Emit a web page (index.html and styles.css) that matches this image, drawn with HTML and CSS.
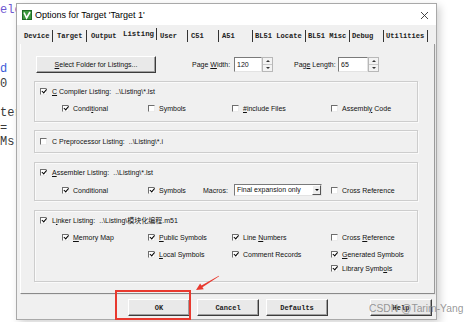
FILE: index.html
```html
<!DOCTYPE html>
<html lang="en">
<head>
  <meta charset="UTF-8">
  <title>Options for Target 'Target 1'</title>
  <link rel="stylesheet" href="styles.css">
</head>
<body>
<pre class="code"><span class="kw">ele</span>



<span class="fn">d (</span>
0

ter
=
Ms</pre>

  <div class="dialog">
    <div class="titlebar">
      <svg class="app-icon" width="10" height="10" viewBox="0 0 10 10">
        <rect x="0.5" y="0.5" width="9" height="9" fill="#3c9a3e" stroke="#1f6b25"/>
        <path d="M2 2.5 L4.6 8 L8 2" fill="none" stroke="#fff" stroke-width="1.6"/>
      </svg>
      <span>Options for Target 'Target 1'</span>
      <svg class="close" width="9" height="9" viewBox="0 0 9 9">
        <path d="M1 1 L8 8 M8 1 L1 8" stroke="#333" stroke-width="0.9"/>
      </svg>
    </div>

    <div class="tabs">
      <span class="tab t-device">Device</span>
      <span class="tab t-target">Target</span>
      <span class="tab t-output">Output</span>
      <span class="tab t-listing active">Listing</span>
      <span class="tab t-user">User</span>
      <span class="tab t-c51">C51</span>
      <span class="tab t-a51">A51</span>
      <span class="tab t-locate">BL51 Locate</span>
      <span class="tab t-misc">BL51 Misc</span>
      <span class="tab t-debug">Debug</span>
      <span class="tab t-util">Utilities</span>
    </div>

    <div class="page">
      <div class="top-row">
        <button class="btn folder"><u>S</u>elect Folder for Listings...</button>
        <span class="lbl lbl-width">Page <u>W</u>idth:</span>
        <span class="field f-width">120</span>
        <span class="spin"><i class="up"></i><i class="down"></i></span>
        <span class="lbl lbl-length">Pag<u>e</u> Length:</span>
        <span class="field f-length">65</span>
        <span class="spin"><i class="up"></i><i class="down"></i></span>
      </div>

      <div class="group g1">
        <div class="head"><span class="cb on"></span><span><u>C</u> Compiler Listing:</span><span class="path">..\Listing\*.lst</span></div>
        <div class="row">
          <span class="item c1"><span class="cb on"></span><span>Condi<u>t</u>ional</span></span>
          <span class="item c2"><span class="cb"></span><span>Symbols</span></span>
          <span class="item c3"><span class="cb"></span><span><u>#</u>include Files</span></span>
          <span class="item"><span class="cb"></span><span>Assembl<u>y</u> Code</span></span>
        </div>
      </div>

      <div class="group g2">
        <div class="head"><span class="cb"></span><span>C Preprocessor Listing:</span><span class="path">..\Listing\*.i</span></div>
      </div>

      <div class="group g3">
        <div class="head"><span class="cb on"></span><span><u>A</u>ssembler Listing:</span><span class="path">..\Listing\*.lst</span></div>
        <div class="row">
          <span class="item c1"><span class="cb on"></span><span>Conditional</span></span>
          <span class="item c2s"><span class="cb on"></span><span>Symbols</span></span>
          <span class="lbl macros">Macros:</span>
          <span class="select">Final expansion only<span class="drop"><i></i></span></span>
          <span class="item xref"><span class="cb"></span><span>Cross Reference</span></span>
        </div>
      </div>

      <div class="group g4">
        <div class="head"><span class="cb on"></span><span>L<u>i</u>nker Listing:</span><span class="path">..\Listing\模块化编程.m51</span></div>
        <div class="row">
          <span class="item c1"><span class="cb on"></span><span><u>M</u>emory Map</span></span>
          <span class="item c2"><span class="cb on"></span><span><u>P</u>ublic Symbols</span></span>
          <span class="item c3"><span class="cb on"></span><span>Line <u>N</u>umbers</span></span>
          <span class="item"><span class="cb"></span><span>Cross <u>R</u>eference</span></span>
        </div>
        <div class="row skip1">
          <span class="item c2"><span class="cb on"></span><span><u>L</u>ocal Symbols</span></span>
          <span class="item c3"><span class="cb on"></span><span>Comment Records</span></span>
          <span class="item"><span class="cb on"></span><span><u>G</u>enerated Symbols</span></span>
        </div>
        <div class="row tight skip3">
          <span class="item"><span class="cb on"></span><span>Library Symb<u>o</u>ls</span></span>
        </div>
      </div>
    </div>

    <div class="buttons">
      <button class="btn cmd">OK</button>
      <button class="btn cmd">Cancel</button>
      <button class="btn cmd">Defaults</button>
      <button class="btn cmd help">Help</button>
    </div>
  </div>

  <div class="mark-box"></div>
  <svg class="mark-arrow" width="30" height="22" viewBox="0 0 30 22">
    <polygon points="26.87,3.79 27.13,4.21 10.48,15.22 11.78,17.35 4,18 8.14,11.39 9.44,13.52" fill="#e8392f"/>
  </svg>
  <div class="watermark">CSDN @Tarim-Yang</div>
</body>
</html>
```

FILE: styles.css
```css
body {
  margin: 0;
  width: 474px;
  height: 322px;
  overflow: hidden;
  position: relative;
  background: #fff;
  font-family: 'Liberation Sans', Arial, sans-serif;
}
.code {
  margin: 0;
  padding-top: 3px;
  font-family: 'Liberation Mono', monospace;
  font-size: 12px;
  line-height: 14.7px;
  color: #3a3a3a;
}
.code .kw {
  color: #6f58d2;
}
.code .fn {
  color: #3b5bd8;
}

/* dialog window */
.dialog {
  position: absolute;
  left: 16px;
  top: 3px;
  width: 421px;
  height: 317px;
  box-sizing: border-box;
  border: 1px solid #a9a9a9;
  background: #f0f0f0;
  box-shadow: 3px 3px 8px rgba(0,0,0,0.18);
  display: flex;
  flex-direction: column;
  color: #111;
  font-size: 7px;
}
.titlebar {
  height: 21px;
  flex: none;
  background: #fff;
  display: flex;
  align-items: center;
  gap: 3px;
  padding: 1px 7px 0 5px;
  box-sizing: border-box;
  font-size: 9px;
  color: #000;
}
.titlebar .close {
  margin-left: auto;
}

/* tabs */
.tabs {
  height: 19px;
  flex: none;
  display: flex;
  align-items: center;
  padding: 2px 0 0 3px;
  box-sizing: border-box;
  font-family: 'Liberation Mono', monospace;
  font-weight: bold;
  font-size: 7.1px;
  color: #222;
}
.tab {
  box-sizing: border-box;
  height: 12px;
  line-height: 12px;
  padding-left: 3px;
  border-right: 1px solid #333;
  white-space: nowrap;
}
.tab.active {
  margin-top: -3px;
  font-size: 7.4px;
}
.t-device { width: 33px; padding-left: 4px; }
.t-target { width: 34px; padding-left: 4px; }
.t-output { width: 32px; padding-left: 4px; border-right: none; }
.t-listing { width: 38px; padding-left: 4px; }
.t-user { width: 31px; }
.t-c51 { width: 31px; }
.t-a51 { width: 34px; }
.t-locate { width: 53px; padding-left: 2px; }
.t-misc { width: 44px; padding-left: 2px; }
.t-debug { width: 34px; padding-left: 2px; }
.t-util { width: 44px; padding-left: 2px; }

/* tab page */
.page {
  flex: none;
  margin-left: 3px;
  width: 415px;
  height: 250px;
  box-sizing: border-box;
  border-left: 1px solid #fff;
  border-right: 1px solid #9a9a9a;
  border-bottom: 1px solid #8a8a8a;
  box-shadow: 1px 1px 0 #e6e6e6;
  padding-top: 12px;
}
.top-row {
  display: flex;
  align-items: center;
  height: 17px;
  padding-left: 15px;
}
.btn {
  font-family: 'Liberation Sans', Arial, sans-serif;
  font-size: 7px;
  color: #111;
  background: #e9e9e9;
  border: 1px solid;
  border-color: #fff #3c3c3c #3c3c3c #fff;
  box-shadow: inset -1px -1px 0 #a0a0a0;
  padding: 0;
  margin: 0;
  box-sizing: border-box;
}
.btn.folder {
  width: 120px;
  height: 17px;
}
.lbl {
  white-space: nowrap;
}
.lbl-width {
  margin-left: 36px;
  width: 42px;
}
.lbl-length {
  margin-left: 21px;
  width: 44px;
}
.field {
  box-sizing: border-box;
  height: 15px;
  line-height: 13px;
  padding-left: 2px;
  background: #fff;
  border: 1px solid;
  border-color: #7a7a7a #e3e3e3 #e3e3e3 #7a7a7a;
}
.f-width { width: 28px; }
.f-length { width: 30px; }
.spin {
  box-sizing: border-box;
  width: 11px;
  height: 15px;
  display: flex;
  flex-direction: column;
  background: #f3f3f3;
  border: 1px solid #b8b8b8;
}
.spin i {
  flex: 1;
  position: relative;
}
.spin i.up {
  border-bottom: 1px solid #c8c8c8;
}
.spin i::after {
  content: '';
  position: absolute;
  left: 3px;
  top: 2px;
  border-left: 2px solid transparent;
  border-right: 2px solid transparent;
}
.spin i.up::after {
  border-bottom: 2px solid #333;
}
.spin i.down::after {
  border-top: 2px solid #333;
}

/* groups */
.group {
  margin-left: 13px;
  width: 384px;
  box-sizing: border-box;
  border: 1px solid #cdcdcd;
  box-shadow: inset 1px 1px 0 #fafafa, 1px 1px 0 #fafafa;
  padding: 3px 0 0 5px;
}
.g1 { margin-top: 8px; height: 41px; }
.g2 { margin-top: 8px; height: 23px; padding-top: 4px; }
.g3 { margin-top: 9px; height: 39px; }
.g4 { margin-top: 9px; height: 72px; }
.head {
  display: flex;
  align-items: center;
  height: 12px;
  white-space: nowrap;
}
.head .cb {
  margin-right: 5px;
}
.path {
  margin-left: 4px;
  font-family: 'Liberation Sans', 'Noto Sans CJK SC', sans-serif;
}
.row {
  display: flex;
  align-items: center;
  height: 12px;
  margin-top: 5px;
  padding-left: 22px;
  white-space: nowrap;
}
.g3 .row {
  margin-top: 6px;
}
.row.tight {
  margin-top: 2px;
}
.row.skip1 {
  padding-left: 108px;
}
.row.skip3 {
  padding-left: 291px;
}
.item {
  display: flex;
  align-items: center;
  gap: 4px;
}
.c1 { width: 86px; }
.c2 { width: 84px; }
.c3 { width: 99px; }
.c2s { width: 55px; }
.macros {
  width: 31px;
}
.xref {
  margin-left: 9px;
}
.select {
  position: relative;
  box-sizing: border-box;
  width: 88px;
  height: 12px;
  line-height: 10px;
  padding-left: 2px;
  background: #fff;
  border: 1px solid;
  border-color: #7a7a7a #e3e3e3 #e3e3e3 #7a7a7a;
}
.drop {
  position: absolute;
  right: 0;
  top: 0;
  width: 9px;
  height: 10px;
  box-sizing: border-box;
  background: #ececec;
  border: 1px solid;
  border-color: #fff #555 #555 #fff;
}
.drop i {
  position: absolute;
  left: 1.5px;
  top: 3px;
  border-left: 2px solid transparent;
  border-right: 2px solid transparent;
  border-top: 2px solid #000;
}

/* checkbox */
.cb {
  position: relative;
  flex: none;
  width: 7px;
  height: 7px;
  box-sizing: border-box;
  background: #fff;
  border: 1px solid;
  border-color: #6e6e6e #ececec #ececec #6e6e6e;
}
.cb.on::after {
  content: '';
  position: absolute;
  left: 1.5px;
  top: -0.5px;
  width: 1.5px;
  height: 3.5px;
  border: solid #000;
  border-width: 0 1.3px 1.3px 0;
  transform: rotate(40deg);
}

/* bottom buttons */
.buttons {
  display: flex;
  gap: 7px;
  margin-top: 5px;
  padding: 0 4px 0 111px;
}
.btn.cmd {
  width: 62px;
  height: 17px;
  font-family: 'Liberation Mono', monospace;
  font-weight: bold;
  font-size: 7px;
  color: #222;
}
.btn.help {
  margin-left: auto;
}

/* annotations drawn over the screenshot */
.mark-box {
  position: absolute;
  left: 115px;
  top: 290px;
  width: 76px;
  height: 30px;
  box-sizing: border-box;
  border: 2px solid #e8392f;
}
.mark-arrow {
  position: absolute;
  left: 192px;
  top: 272px;
}
.watermark {
  position: absolute;
  left: 369px;
  top: 303px;
  font-size: 10.3px;
  color: rgba(128,128,128,0.8);
  white-space: nowrap;
}
```
